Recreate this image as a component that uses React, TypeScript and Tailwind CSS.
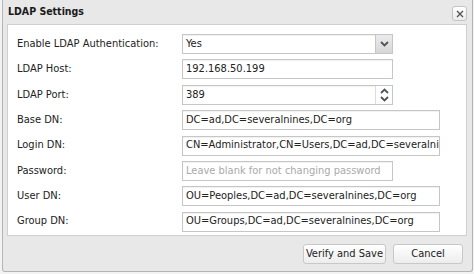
import React from 'react';

const FONT = "font-['DejaVu_Sans_Condensed','DejaVu_Sans',sans-serif]";

const ChevronDown: React.FC = () => (
  <svg width="9" height="6" viewBox="0 0 9 6" aria-hidden>
    <path d="M1 1l3.5 3.5L8 1" fill="none" stroke="#4a5560" strokeWidth="1.8" />
  </svg>
);

const ChevronUp: React.FC = () => (
  <svg width="9" height="6" viewBox="0 0 9 6" aria-hidden>
    <path d="M1 5l3.5-3.5L8 5" fill="none" stroke="#4a5560" strokeWidth="1.8" />
  </svg>
);

type Row = {
  label: string;
  value?: string;
  placeholder?: string;
  kind: 'select' | 'number' | 'text';
  wide?: boolean;
};

const ROWS: Row[] = [
  { label: 'Enable LDAP Authentication:', value: 'Yes', kind: 'select' },
  { label: 'LDAP Host:', value: '192.168.50.199', kind: 'text' },
  { label: 'LDAP Port:', value: '389', kind: 'number' },
  { label: 'Base DN:', value: 'DC=ad,DC=severalnines,DC=org', kind: 'text', wide: true },
  { label: 'Login DN:', value: 'CN=Administrator,CN=Users,DC=ad,DC=severalnines,DC=org', kind: 'text', wide: true },
  { label: 'Password:', placeholder: 'Leave blank for not changing password', kind: 'text' },
  { label: 'User DN:', value: 'OU=Peoples,DC=ad,DC=severalnines,DC=org', kind: 'text', wide: true },
  { label: 'Group DN:', value: 'OU=Groups,DC=ad,DC=severalnines,DC=org', kind: 'text', wide: true },
];

const Field: React.FC<{ row: Row }> = ({ row }) => {
  const width = row.wide ? 'w-[258px]' : 'w-[211px]';
  return (
    <div
      className={`${width} h-[20px] flex items-stretch border border-[#c6c6c6] bg-white shadow-[inset_0_1px_1px_rgba(0,0,0,0.06)] overflow-hidden`}
    >
      <div
        className={`flex-1 min-w-0 flex items-center pl-[3px] whitespace-nowrap overflow-hidden text-[11px] ${
          row.value ? 'text-[#222]' : 'text-[#a9a9a9]'
        }`}
      >
        {row.value ?? row.placeholder}
      </div>
      {row.kind === 'select' && (
        <div className="w-[17px] flex items-center justify-center border-l border-[#c6c6c6] bg-gradient-to-b from-[#ececec] to-[#d6d6d6]">
          <ChevronDown />
        </div>
      )}
      {row.kind === 'number' && (
        <div className="w-[17px] flex flex-col items-center justify-center gap-[2px] border-l border-[#dcdcdc] bg-white">
          <ChevronUp />
          <ChevronDown />
        </div>
      )}
    </div>
  );
};

const App: React.FC = () => {
  return (
    <div className={`w-[474px] h-[274px] bg-[#f3f3f3] pl-[2px] pr-[1px] pb-[2px] ${FONT}`}>
      <div className="h-full flex flex-col border border-[#b4b4b4] border-t-0 rounded-b-[3px] bg-[#e8e8e8]">
        <header className="h-[24px] shrink-0 flex items-center justify-between pl-[5px] pr-[5px]">
          <h1 className="text-[10.5px] font-bold text-[#1a1a1a]">LDAP Settings</h1>
          <button
            type="button"
            className="w-[15px] h-[15px] mt-[3px] flex items-center justify-center rounded-[3px] border border-[#c4c4c4] bg-gradient-to-b from-white to-[#ececec]"
            aria-label="Close"
          >
            <svg width="8" height="8" viewBox="0 0 8 8" aria-hidden>
              <path d="M1 1l6 6M7 1l-6 6" stroke="#555" strokeWidth="1.4" />
            </svg>
          </button>
        </header>

        <section className="ml-[4px] mr-[5px] h-[212px] bg-white border border-[#cfcfcf] pt-[9px] pl-[9px]">
          <div className="flex flex-col gap-[5.4px]">
            {ROWS.map((row) => (
              <div key={row.label} className="flex items-center">
                <label className="w-[165px] shrink-0 text-[11px] text-[#222]">{row.label}</label>
                <Field row={row} />
              </div>
            ))}
          </div>
        </section>

        <footer className="flex-1 flex items-center justify-end gap-[7px] pr-[9px] pt-[1px]">
          <button
            type="button"
            className="w-[83px] h-[20px] whitespace-nowrap rounded-[3px] border border-[#c8c8c8] bg-gradient-to-b from-white to-[#ededed] text-[11px] text-[#222]"
          >
            Verify and Save
          </button>
          <button
            type="button"
            className="w-[70px] h-[20px] whitespace-nowrap rounded-[3px] border border-[#c8c8c8] bg-gradient-to-b from-white to-[#ededed] text-[11px] text-[#222]"
          >
            Cancel
          </button>
        </footer>
      </div>
    </div>
  );
};

export default App;
